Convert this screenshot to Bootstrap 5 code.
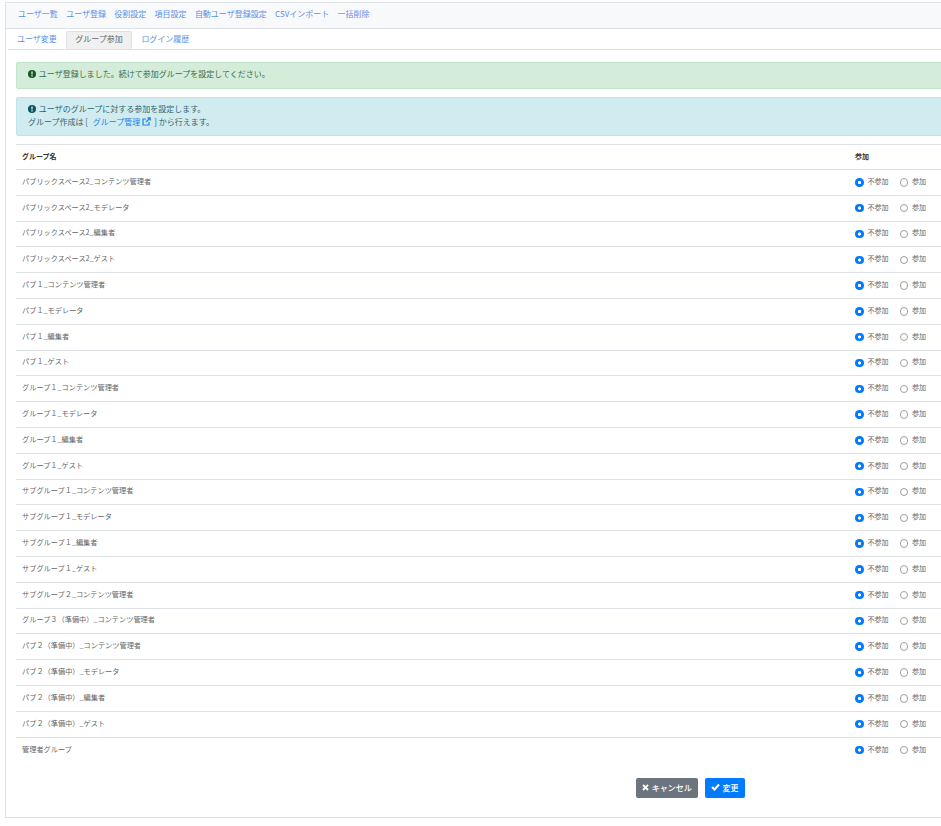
<!DOCTYPE html>
<html lang="ja"><head><meta charset="utf-8"><title>グループ参加</title>
<link href="https://cdn.jsdelivr.net/npm/bootstrap@5.3.0/dist/css/bootstrap.min.css" rel="stylesheet">
<style>
html,body{height:826px;overflow:hidden;background:#fff}
body{font-family:"Noto Sans CJK JP","Noto Sans",sans-serif;font-size:8px;color:#666}
.shell{margin:2px 0 0 5px;width:960px;height:816px;border:1px solid #dee2e6;border-right:0}
.topbar{height:26px;background:#f8f9fa;border-bottom:1px solid #dee2e6;padding:0 0 3px 12px;gap:8.300px;font-size:8px}
.topbar a,.tabrow a{color:#5a8fe8;text-decoration:none}
.tabrow{margin:0 0 0 2px;height:21px;border-bottom:1px solid #dee2e6;font-size:8px}
.tabrow a{padding:0 8px;line-height:13px;height:18px;margin-top:2px;border:1px solid transparent}
.tabrow a.on{padding:0 8.500px;background:#f0f0f0;color:#666;border-color:#dee2e6;border-bottom-color:#f0f0f0;border-radius:2px 2px 0 0}
.body-area{padding:12px 0 0 10px}
.note{padding:5px 11px;border-radius:2px;font-size:8px;line-height:12px;margin-bottom:8px;border:1px solid}
.note-ok{background:#d4edda;border-color:#c3e6cb;color:#3b6b47;height:27px}
.note-info{background:#d1ecf1;border-color:#bee5eb;color:#2f6470;height:39px;line-height:12.500px}
.note svg{vertical-align:-1px;margin-right:1px}
.note a{color:#1f7fe8;text-decoration:none;margin:0 2px 0 3px}
.note a svg{margin:0 1px 0 2px}
.grp{width:960px;margin:0;table-layout:fixed;font-size:7.200px;color:#666;border-top:1px solid #dee2e6}
.grp th,.grp td{height:25.800px;padding:0 6px;border-bottom:1px solid #dee2e6;vertical-align:middle;line-height:10px;box-shadow:none}
.grp th{height:25px;padding-bottom:2px;color:#333;font-weight:700;font-size:7px}
.grp td.nm{padding-bottom:3px}
.pick{gap:4px}
.pick .dot{width:8.500px;height:8.500px;border-radius:50%;border:1px solid #a0a0a0;background:#fff;flex:none}
.pick .dot.sel{border:0;background:radial-gradient(circle,#fff 0,#fff 1.300px,#007bff 1.900px)}
.pick span.t{margin-right:7px;margin-top:-3px;font-size:7px}
.actions{padding-top:15px;gap:7px;padding-left:620px}
.act{font-size:8px;height:20px;padding:0 6px;border-radius:2px;color:#fff;border:0;font-weight:500;line-height:20px}
.act svg{vertical-align:-0.500px;margin-right:1px}
.act-c{background:#6c757d}
.act-o{background:#007bff}
</style></head><body>
<div class="shell">
<div class="topbar d-flex align-items-center">
<a href="#">ユーザ一覧</a><a href="#">ユーザ登録</a><a href="#">役割設定</a><a href="#">項目設定</a><a href="#">自動ユーザ登録設定</a><a href="#">CSVインポート</a><a href="#">一括削除</a>
</div>
<div class="tabrow d-flex"><a href="#">ユーザ変更</a><a href="#" class="on">グループ参加</a><a href="#">ログイン履歴</a></div>
<div class="body-area">
<div class="note note-ok"><svg width="8" height="8" viewBox="0 0 8 8"><circle cx="4" cy="4" r="4" fill="#155724"/><rect x="3.300" y="1.500" width="1.400" height="3" fill="#d4edda"/><rect x="3.300" y="5.200" width="1.400" height="1.300" fill="#d4edda"/></svg> ユーザ登録しました。続けて参加グループを設定してください。</div>
<div class="note note-info"><svg width="8" height="8" viewBox="0 0 8 8"><circle cx="4" cy="4" r="4" fill="#0c5460"/><rect x="3.300" y="1.500" width="1.400" height="3" fill="#d1ecf1"/><rect x="3.300" y="5.200" width="1.400" height="1.300" fill="#d1ecf1"/></svg> ユーザのグループに対する参加を設定します。<br>グループ作成は [ <a href="#">グループ管理<svg width="9" height="9" viewBox="0 0 9 9" fill="none" stroke="#1f7fe8" stroke-width="1.200"><path d="M7 5v3H1V2h3M4 5l4-4M5.500 .8H8.200V3.500"/></svg></a>] から行えます。</div>
<table class="grp"><colgroup><col style="width:833px"><col></colgroup>
<thead><tr><th>グループ名</th><th>参加</th></tr></thead>
<tbody>
<tr><td class="nm">パブリックスペース2_コンテンツ管理者</td><td><div class="pick d-flex align-items-center"><i class="dot sel"></i><span class="t">不参加</span><i class="dot"></i><span class="t">参加</span></div></td></tr>
<tr><td class="nm">パブリックスペース2_モデレータ</td><td><div class="pick d-flex align-items-center"><i class="dot sel"></i><span class="t">不参加</span><i class="dot"></i><span class="t">参加</span></div></td></tr>
<tr><td class="nm">パブリックスペース2_編集者</td><td><div class="pick d-flex align-items-center"><i class="dot sel"></i><span class="t">不参加</span><i class="dot"></i><span class="t">参加</span></div></td></tr>
<tr><td class="nm">パブリックスペース2_ゲスト</td><td><div class="pick d-flex align-items-center"><i class="dot sel"></i><span class="t">不参加</span><i class="dot"></i><span class="t">参加</span></div></td></tr>
<tr><td class="nm">パブ１_コンテンツ管理者</td><td><div class="pick d-flex align-items-center"><i class="dot sel"></i><span class="t">不参加</span><i class="dot"></i><span class="t">参加</span></div></td></tr>
<tr><td class="nm">パブ１_モデレータ</td><td><div class="pick d-flex align-items-center"><i class="dot sel"></i><span class="t">不参加</span><i class="dot"></i><span class="t">参加</span></div></td></tr>
<tr><td class="nm">パブ１_編集者</td><td><div class="pick d-flex align-items-center"><i class="dot sel"></i><span class="t">不参加</span><i class="dot"></i><span class="t">参加</span></div></td></tr>
<tr><td class="nm">パブ１_ゲスト</td><td><div class="pick d-flex align-items-center"><i class="dot sel"></i><span class="t">不参加</span><i class="dot"></i><span class="t">参加</span></div></td></tr>
<tr><td class="nm">グループ１_コンテンツ管理者</td><td><div class="pick d-flex align-items-center"><i class="dot sel"></i><span class="t">不参加</span><i class="dot"></i><span class="t">参加</span></div></td></tr>
<tr><td class="nm">グループ１_モデレータ</td><td><div class="pick d-flex align-items-center"><i class="dot sel"></i><span class="t">不参加</span><i class="dot"></i><span class="t">参加</span></div></td></tr>
<tr><td class="nm">グループ１_編集者</td><td><div class="pick d-flex align-items-center"><i class="dot sel"></i><span class="t">不参加</span><i class="dot"></i><span class="t">参加</span></div></td></tr>
<tr><td class="nm">グループ１_ゲスト</td><td><div class="pick d-flex align-items-center"><i class="dot sel"></i><span class="t">不参加</span><i class="dot"></i><span class="t">参加</span></div></td></tr>
<tr><td class="nm">サブグループ１_コンテンツ管理者</td><td><div class="pick d-flex align-items-center"><i class="dot sel"></i><span class="t">不参加</span><i class="dot"></i><span class="t">参加</span></div></td></tr>
<tr><td class="nm">サブグループ１_モデレータ</td><td><div class="pick d-flex align-items-center"><i class="dot sel"></i><span class="t">不参加</span><i class="dot"></i><span class="t">参加</span></div></td></tr>
<tr><td class="nm">サブグループ１_編集者</td><td><div class="pick d-flex align-items-center"><i class="dot sel"></i><span class="t">不参加</span><i class="dot"></i><span class="t">参加</span></div></td></tr>
<tr><td class="nm">サブグループ１_ゲスト</td><td><div class="pick d-flex align-items-center"><i class="dot sel"></i><span class="t">不参加</span><i class="dot"></i><span class="t">参加</span></div></td></tr>
<tr><td class="nm">サブグループ２_コンテンツ管理者</td><td><div class="pick d-flex align-items-center"><i class="dot sel"></i><span class="t">不参加</span><i class="dot"></i><span class="t">参加</span></div></td></tr>
<tr><td class="nm">グループ３（準備中）_コンテンツ管理者</td><td><div class="pick d-flex align-items-center"><i class="dot sel"></i><span class="t">不参加</span><i class="dot"></i><span class="t">参加</span></div></td></tr>
<tr><td class="nm">パブ２（準備中）_コンテンツ管理者</td><td><div class="pick d-flex align-items-center"><i class="dot sel"></i><span class="t">不参加</span><i class="dot"></i><span class="t">参加</span></div></td></tr>
<tr><td class="nm">パブ２（準備中）_モデレータ</td><td><div class="pick d-flex align-items-center"><i class="dot sel"></i><span class="t">不参加</span><i class="dot"></i><span class="t">参加</span></div></td></tr>
<tr><td class="nm">パブ２（準備中）_編集者</td><td><div class="pick d-flex align-items-center"><i class="dot sel"></i><span class="t">不参加</span><i class="dot"></i><span class="t">参加</span></div></td></tr>
<tr><td class="nm">パブ２（準備中）_ゲスト</td><td><div class="pick d-flex align-items-center"><i class="dot sel"></i><span class="t">不参加</span><i class="dot"></i><span class="t">参加</span></div></td></tr>
<tr><td class="nm border-0">管理者グループ</td><td class="border-0"><div class="pick d-flex align-items-center"><i class="dot sel"></i><span class="t">不参加</span><i class="dot"></i><span class="t">参加</span></div></td></tr>
</tbody></table>
<div class="actions d-flex">
<button class="act act-c"><svg width="7" height="7" viewBox="0 0 7 7"><path d="M1 1l5 5M6 1L1 6" fill="none" stroke="#fff" stroke-width="1.800"/></svg> キャンセル</button><button class="act act-o"><svg width="9" height="8" viewBox="0 0 9 8"><path d="M1 4l2.500 2.500L8 1.500" fill="none" stroke="#fff" stroke-width="2"/></svg> 変更</button>
</div>
</div></div>
<script src="https://cdn.jsdelivr.net/npm/bootstrap@5.3.0/dist/js/bootstrap.bundle.min.js"></script>
</body></html>
